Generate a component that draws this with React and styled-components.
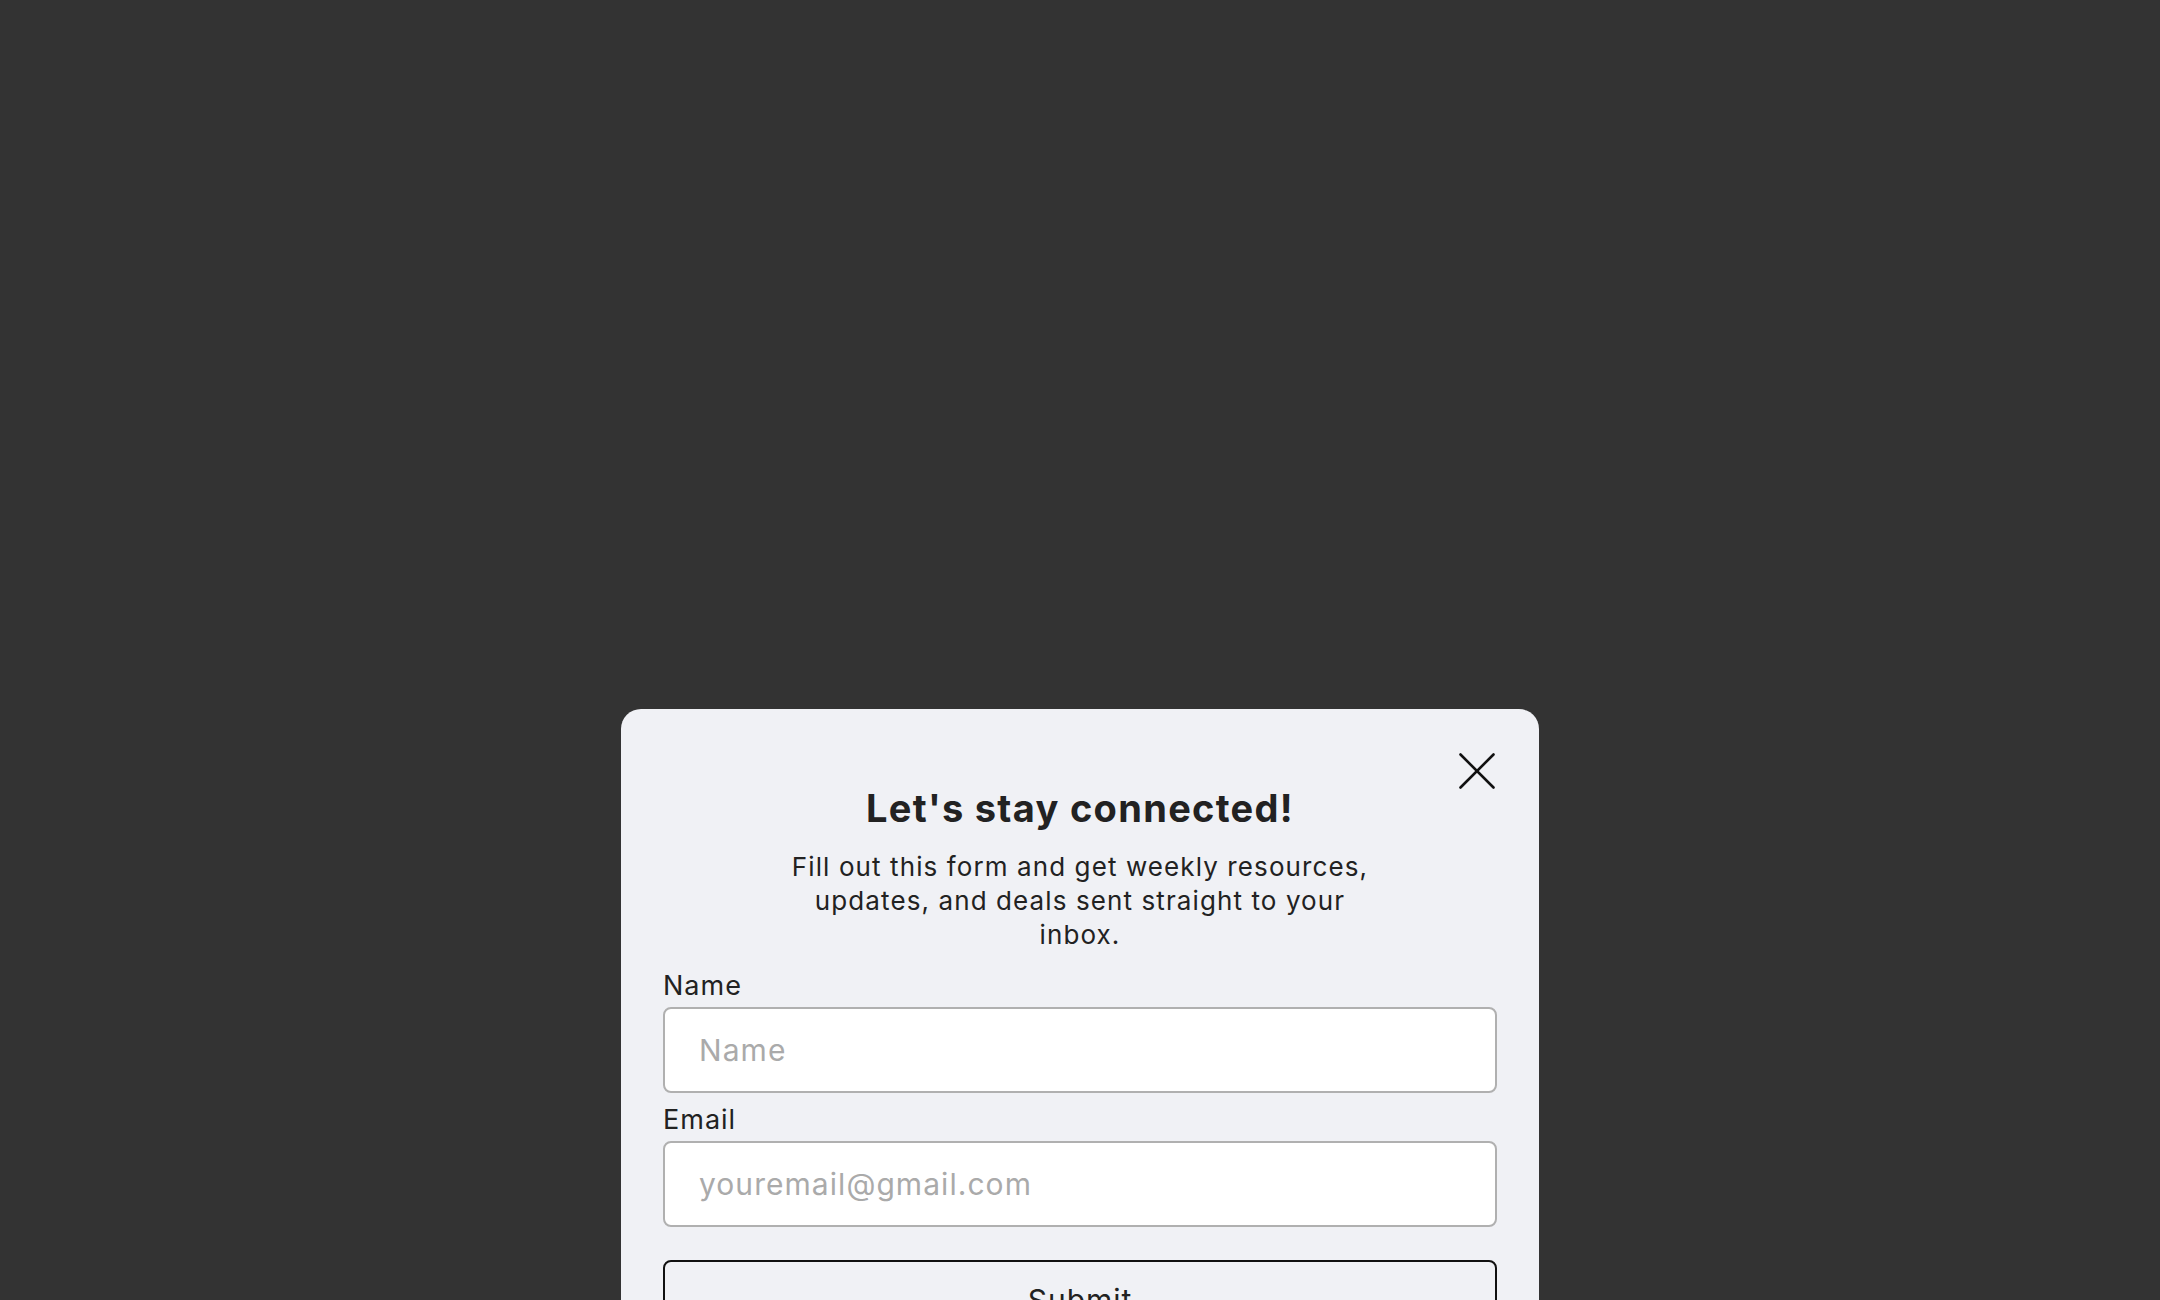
import React from 'react';
import styled, { createGlobalStyle } from 'styled-components';

const GlobalStyle = createGlobalStyle`
  html, body {
    margin: 0;
    padding: 0;
    background: #333333;
    font-family: Inter, "Noto Sans", sans-serif;
    color: #222222;
  }
  * {
    box-sizing: border-box;
  }
`;

export default function App() {
  return (
    <>
      <GlobalStyle />
      <Page>
        <Modal>
          <CloseButton aria-label="Close">
            <svg width="36" height="36" viewBox="0 0 36 36" fill="none">
              <path d="M1.5 1.5 L34.5 34.5 M34.5 1.5 L1.5 34.5" stroke="#111" strokeWidth="2.6" strokeLinecap="round" />
            </svg>
          </CloseButton>
          <Title>Let's stay connected!</Title>
          <Subtitle>Fill out this form and get weekly resources, updates, and deals sent straight to your inbox.</Subtitle>
          <Form onSubmit={(e) => e.preventDefault()}>
            <Field>
              <Label htmlFor="name">Name</Label>
              <Input id="name" type="text" placeholder="Name" />
            </Field>
            <Field>
              <Label htmlFor="email">Email</Label>
              <Input id="email" type="email" placeholder="youremail@gmail.com" />
            </Field>
            <SubmitButton type="submit">Submit</SubmitButton>
          </Form>
        </Modal>
      </Page>
    </>
  );
}

const Page = styled.div`
  height: 100vh;
  overflow: hidden;
  display: flex;
  justify-content: center;
  align-items: flex-start;
  padding-top: 709px;
`;

const Modal = styled.div`
  position: relative;
  width: 918px;
  background: #f0f1f5;
  border-radius: 20px;
  padding: 77px 42px 60px;
  display: flex;
  flex-direction: column;
  align-items: center;
`;

const CloseButton = styled.button`
  position: absolute;
  top: 44px;
  right: 44px;
  width: 36px;
  height: 36px;
  padding: 0;
  border: none;
  background: none;
  cursor: pointer;
  display: flex;
`;

const Title = styled.h2`
  margin: 0;
  font-size: 38px;
  line-height: 1.2;
  font-weight: 700;
  letter-spacing: 1.3px;
  color: #222222;
  text-align: center;
`;

const Subtitle = styled.p`
  margin: 18px 0 0;
  max-width: 590px;
  font-size: 26px;
  line-height: 1.31;
  letter-spacing: 1.1px;
  text-align: center;
  color: #222222;
`;

const Form = styled.form`
  width: 100%;
  margin-top: 18px;
  display: flex;
  flex-direction: column;
`;

const Field = styled.div`
  display: flex;
  flex-direction: column;
  gap: 4.6px;
  margin-bottom: 11px;
`;

const Label = styled.label`
  font-size: 27px;
  line-height: 1.2;
  letter-spacing: 1px;
  color: #222222;
`;

const Input = styled.input`
  height: 86px;
  width: 100%;
  padding: 0 34px;
  font-family: Inter, "Noto Sans", sans-serif;
  font-size: 30px;
  letter-spacing: 1.05px;
  color: #222222;
  background: #ffffff;
  border: 2px solid #b0b0b0;
  border-radius: 8px;
  outline: none;

  &::placeholder {
    color: #aaaaaa;
  }
`;

const SubmitButton = styled.button`
  margin-top: 22px;
  height: 80px;
  width: 100%;
  font-family: Inter, "Noto Sans", sans-serif;
  font-size: 30px;
  letter-spacing: 1px;
  color: #222222;
  background: transparent;
  border: 2px solid #111111;
  border-radius: 8px;
  cursor: pointer;
`;
